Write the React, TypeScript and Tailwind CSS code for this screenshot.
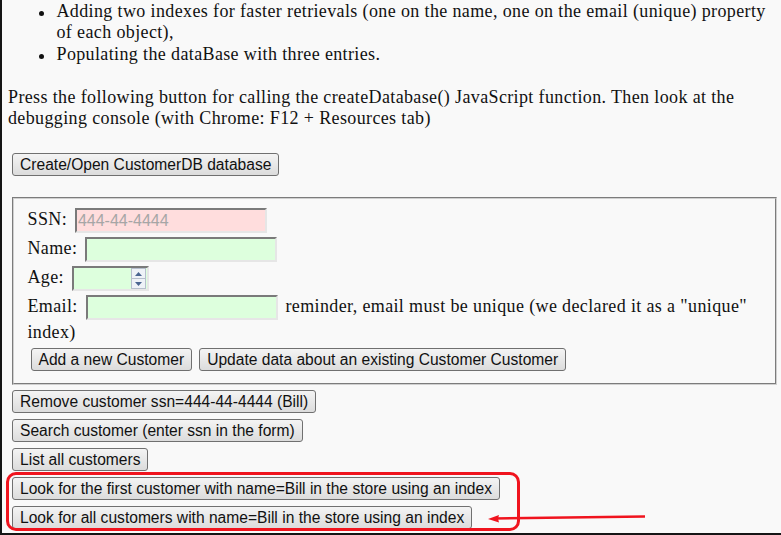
import React from 'react';

const btn =
  "h-[23px] px-[7px] rounded-[3px] border border-[#707070] bg-gradient-to-b from-[#f4f4f4] to-[#dcdcdc] text-[15.6px] leading-[21px] tracking-normal text-[#111] font-['Liberation_Sans',Arial,sans-serif] whitespace-nowrap";

const field =
  "inline-block align-middle my-[2px] ml-[3px] h-[25px] w-[192px] border-2 border-t-[#7a7a7a] border-l-[#7a7a7a] border-b-[#e6e6e6] border-r-[#e6e6e6] px-[1px] text-[16px] tracking-normal font-['Liberation_Sans',Arial,sans-serif] outline-none";

function Bullet({ children }: { children: React.ReactNode }) {
  return (
    <li className="flex">
      <span className="w-[48.5px] shrink-0 flex justify-end pr-[12.5px] pt-[10.5px]">
        <span className="block w-[5px] h-[5px] rounded-full bg-[#111]" />
      </span>
      <span className="flex-1">{children}</span>
    </li>
  );
}

function AgeField() {
  return (
    <span className="inline-flex align-middle my-[2px] ml-[3px] h-[25px] w-[77px] border-2 border-t-[#7a7a7a] border-l-[#7a7a7a] border-b-[#e6e6e6] border-r-[#e6e6e6] bg-[#ddffdd]">
      <input className="flex-1 min-w-0 bg-transparent outline-none text-[16px] font-['Liberation_Sans',Arial,sans-serif]" />
      <span className="flex flex-col w-[15px] mr-[1px]">
        <span className="flex-1 flex items-center justify-center border border-[#b6bfcc] bg-[#eef2f7]">
          <svg width="7" height="4" viewBox="0 0 7 4"><path d="M0 4 L3.5 0 L7 4 Z" fill="#4a6590" /></svg>
        </span>
        <span className="flex-1 flex items-center justify-center border border-t-0 border-[#b6bfcc] bg-[#eef2f7]">
          <svg width="7" height="4" viewBox="0 0 7 4"><path d="M0 0 L3.5 4 L7 0 Z" fill="#4a6590" /></svg>
        </span>
      </span>
    </span>
  );
}

export default function App() {
  return (
    <div className="h-[535px] overflow-hidden bg-[#f9f9f9] border-l-2 border-b-2 border-[#151515] pl-[6px] pr-[4px] pt-[0.5px] text-[18px] tracking-[0.37px] text-[#111] font-['Liberation_Serif','Times_New_Roman',serif]">
      <ul className="leading-[21.5px]">
        <Bullet>
          Adding two indexes for faster retrievals (one on the name, one on the email (unique) property of
          each object),
        </Bullet>
        <Bullet>Populating the dataBase with three entries.</Bullet>
      </ul>

      <p className="mt-[21.5px] leading-[21px] pr-[4px]">
        Press the following button for calling the createDatabase() JavaScript function. Then look at the
        debugging console (with Chrome: F12 + Resources tab)
      </p>

      <div className="mt-[24px] ml-[4px] flex">
        <button type="button" className={btn + " h-[23.5px]"}>
          Create/Open CustomerDB database
        </button>
      </div>

      <fieldset className="mt-[21.5px] ml-[4px] border-2 [border-style:groove] border-[#d0d0d0] pt-[7px] px-[13.5px] pb-[12.5px]">
        <div className="leading-[24px]">
          SSN:{' '}
          <input
            className={field + " bg-[#ffdddd] placeholder:text-[#a6a6a6]"}
            placeholder="444-44-4444"
          />
        </div>
        <div className="leading-[24px]">
          Name:{' '}
          <input className={field + " bg-[#ddffdd]"} />
        </div>
        <div className="leading-[24px]">
          Age:{' '}
          <AgeField />
        </div>
        <div className="leading-[21.5px]">
          Email:{' '}
          <input className={field + " bg-[#ddffdd] mr-[3px]"} /> reminder, email must be unique (we declared
          it as a "unique" index)
        </div>
        <div className="mt-[4px] ml-[3px] flex gap-[7px]">
          <button type="button" className={btn}>
            Add a new Customer
          </button>
          <button type="button" className={btn}>
            Update data about an existing Customer Customer
          </button>
        </div>
      </fieldset>

      <div className="mt-[5px] ml-[4px] flex flex-col items-start gap-[6px]">
        <button type="button" className={btn}>
          Remove customer ssn=444-44-4444 (Bill)
        </button>
        <button type="button" className={btn}>
          Search customer (enter ssn in the form)
        </button>
        <button type="button" className={btn}>
          List all customers
        </button>
        <div className="relative flex flex-col items-start gap-[6px]">
          <button type="button" className={btn}>
            Look for the first customer with name=Bill in the store using an index
          </button>
          <button type="button" className={btn}>
            Look for all customers with name=Bill in the store using an index
          </button>
          <div className="absolute -left-[6px] -top-[5px] w-[514px] h-[59px] border-[3px] border-[#f0141e] rounded-[10px] pointer-events-none" />
          <svg
            className="absolute left-[456px] top-[28px] pointer-events-none"
            width="180"
            height="24"
            viewBox="0 0 180 24"
          >
            <line x1="177" y1="11.5" x2="26" y2="13.5" stroke="#f0141e" strokeWidth="2.5" />
            <path d="M20 14 L31 10 L30 13.5 L31 17.5 Z" fill="#f0141e" />
          </svg>
        </div>
      </div>
    </div>
  );
}
